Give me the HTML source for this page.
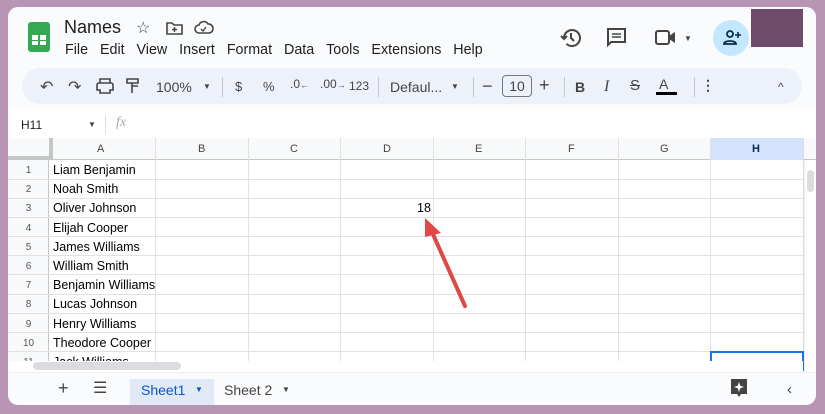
<!DOCTYPE html>
<html><head><meta charset="utf-8"><style>
*{box-sizing:border-box;margin:0;padding:0}
body{width:825px;height:414px;background:#b995b5;font-family:"Liberation Sans",sans-serif;position:relative;overflow:hidden}
.win{position:absolute;left:8px;top:7px;width:808px;height:398px;background:#f9fbfd;border-radius:10px;overflow:hidden}
.a{position:absolute}
.t{position:absolute;white-space:nowrap;color:#1f1f1f}
.grid{position:absolute;left:0;top:131px;width:808px;height:234px;background:#fff;overflow:hidden}
.vl{position:absolute;top:0;width:1px;height:234px;background:#e1e1e1}
.hl{position:absolute;left:0;width:795px;height:1px;background:#e1e1e1}
.tb{font-size:13px;color:#444}
</style></head><body>
<div class="win">
 <div class="a" style="left:20px;top:15px;width:22px;height:30px;background:#34a853;border-radius:3px"></div>
 <div class="a" style="left:24px;top:28px;width:14px;height:10px;background:#fff"></div>
 <div class="a" style="left:30px;top:28px;width:1.5px;height:10px;background:#34a853"></div>
 <div class="a" style="left:24px;top:32.5px;width:14px;height:1.5px;background:#34a853"></div>
 <div class="t" style="left:56px;top:10px;font-size:18px">Names</div>
 <div class="t" style="left:128px;top:11px;font-size:16px;color:#444">☆</div>
 <svg class="a" style="left:158px;top:14px" width="18" height="14"><path d="M1 2h5l2 2h8v9H1z" fill="none" stroke="#444" stroke-width="1.6"/><path d="M8.5 6v5M6 8.5h5" stroke="#444" stroke-width="1.4"/></svg>
 <svg class="a" style="left:186px;top:13px" width="20" height="15"><path d="M5 13a4 4 0 0 1 0-8 5 5 0 0 1 9-1 4 4 0 0 1 1 9z" fill="none" stroke="#444" stroke-width="1.6"/><path d="M7 9l2 2 3-4" fill="none" stroke="#444" stroke-width="1.3"/></svg>
 <div class="t" style="left:57px;top:35px;font-size:14.3px">File&nbsp;&nbsp;&nbsp;Edit&nbsp;&nbsp;&nbsp;View&nbsp;&nbsp;&nbsp;Insert&nbsp;&nbsp;&nbsp;Format&nbsp;&nbsp;&nbsp;Data&nbsp;&nbsp;&nbsp;Tools&nbsp;&nbsp;&nbsp;Extensions&nbsp;&nbsp;&nbsp;Help</div>
 <svg class="a" style="left:552px;top:20px" width="22" height="22"><path d="M4 11a8 8 0 1 1 2.5 5.8" fill="none" stroke="#444" stroke-width="2"/><path d="M1 9l3 3 3-3" fill="none" stroke="#444" stroke-width="2"/><path d="M11 6v5l3 3" fill="none" stroke="#444" stroke-width="2"/></svg>
 <svg class="a" style="left:598px;top:20px" width="22" height="22"><path d="M2 2h17v13H5l-3 3z" fill="none" stroke="#444" stroke-width="2"/><path d="M6 7h9M6 10h9" stroke="#444" stroke-width="1.6"/></svg>
 <svg class="a" style="left:646px;top:22px" width="26" height="18"><rect x="2" y="2" width="13" height="13" rx="2" fill="none" stroke="#444" stroke-width="2"/><path d="M15 7l6-4v11l-6-4z" fill="#444"/></svg>
 <div class="t" style="left:676px;top:27px;font-size:8px;color:#444">▼</div>
 <div class="a" style="left:705px;top:13px;width:36px;height:36px;border-radius:50%;background:#c2e7ff"></div>
 <svg class="a" style="left:714px;top:22px" width="20" height="18"><circle cx="8" cy="5" r="3" fill="none" stroke="#0b2b4a" stroke-width="1.8"/><path d="M2 15c0-4 12-4 12 0z" fill="none" stroke="#0b2b4a" stroke-width="1.8"/><path d="M16 3v6M13 6h6" stroke="#0b2b4a" stroke-width="1.6"/></svg>
 <div class="a" style="left:743px;top:2px;width:52px;height:38px;background:#6e4a6b"></div>
 <div class="a" style="left:14px;top:61px;width:780px;height:36px;background:#edf2fa;border-radius:18px"></div>
 <div class="t tb" style="left:32px;top:70px;font-size:16px">↶</div>
 <div class="t tb" style="left:60px;top:70px;font-size:16px">↷</div>
 <svg class="a" style="left:88px;top:71px" width="18" height="16"><path d="M4 5V1h10v4M3 5h12a2 2 0 0 1 2 2v5h-3v3H4v-3H1V7a2 2 0 0 1 2-2z" fill="none" stroke="#444" stroke-width="1.6"/></svg>
 <svg class="a" style="left:118px;top:70px" width="14" height="18"><path d="M1 2h11v4H1zM6 6v3h6M6 9v7" fill="none" stroke="#444" stroke-width="1.6"/></svg>
 <div class="t tb" style="left:148px;top:72px;font-size:14px">100%</div>
 <div class="t" style="left:195px;top:75px;font-size:8px;color:#444">▼</div>
 <div class="a" style="left:214px;top:70px;width:1px;height:20px;background:#c7c7c7"></div>
 <div class="t tb" style="left:227px;top:72px">$</div>
 <div class="t tb" style="left:255px;top:72px">%</div>
 <div class="t tb" style="left:282px;top:70px;font-size:12px">.0<span style="font-size:9px">←</span></div>
 <div class="t tb" style="left:312px;top:70px;font-size:12px">.00<span style="font-size:9px">→</span></div>
 <div class="t tb" style="left:341px;top:72px;font-size:12px">123</div>
 <div class="a" style="left:370px;top:70px;width:1px;height:20px;background:#c7c7c7"></div>
 <div class="t tb" style="left:382px;top:72px;font-size:14px">Defaul...</div>
 <div class="t" style="left:443px;top:75px;font-size:8px;color:#444">▼</div>
 <div class="a" style="left:465px;top:70px;width:1px;height:20px;background:#c7c7c7"></div>
 <div class="t tb" style="left:474px;top:69px;font-size:18px">−</div>
 <div class="a" style="left:494px;top:68px;width:30px;height:22px;border:1px solid #747775;border-radius:4px;font-size:14px;color:#444;text-align:center;line-height:20px">10</div>
 <div class="t tb" style="left:531px;top:68px;font-size:18px">+</div>
 <div class="a" style="left:556px;top:70px;width:1px;height:20px;background:#c7c7c7"></div>
 <div class="t tb" style="left:567px;top:72px;font-weight:bold;font-size:14px">B</div>
 <div class="t tb" style="left:596px;top:71px;font-style:italic;font-family:'Liberation Serif',serif;font-size:16px">I</div>
 <div class="t tb" style="left:622px;top:70px;font-size:15px;text-decoration:line-through">S</div>
 <div class="t tb" style="left:651px;top:69px;font-size:14px">A</div>
 <div class="a" style="left:648px;top:85px;width:21px;height:3px;background:#000"></div>
 <div class="a" style="left:686px;top:70px;width:1px;height:20px;background:#c7c7c7"></div>
 <div class="t tb" style="left:693px;top:70px;font-weight:bold;font-size:14px">⋮</div>
 <div class="t tb" style="left:770px;top:73px;font-size:12px">^</div>
 <div class="a" style="left:0;top:104px;width:808px;height:27px;background:#fff"></div>
 <div class="t" style="left:13px;top:111px;font-size:12px">H11</div>
 <div class="t" style="left:80px;top:113px;font-size:8px;color:#444">▼</div>
 <div class="a" style="left:97px;top:109px;width:1px;height:18px;background:#ddd"></div>
 <div class="t" style="left:108px;top:108px;font-size:14px;color:#aaa;font-style:italic;font-family:'Liberation Serif',serif">fx</div>
 <div class="grid">
  <div class="a" style="left:0;top:0;width:808px;height:22px;background:#f8f9fa;border-bottom:1px solid #c4c7c5"></div>
  <div class="a" style="left:0;top:0;width:41px;height:234px;background:#f8f9fa;border-right:1px solid #c4c7c5"></div>
  <div class="a" style="left:0;top:0;width:45px;height:22px;background:#f8f9fa;border-right:4px solid #c4c7c5;border-bottom:4px solid #c4c7c5"></div>
  <div class="a" style="left:702px;top:0;width:93px;height:22px;background:#d3e3fd"></div>
  <div class="vl" style="left:147px"></div><div class="vl" style="left:240px"></div><div class="vl" style="left:332px"></div><div class="vl" style="left:425px"></div><div class="vl" style="left:517px"></div><div class="vl" style="left:610px"></div><div class="vl" style="left:702px"></div><div class="vl" style="left:795px;background:#ddd"></div>
  <div class="hl" style="top:41px"></div><div class="hl" style="top:60px"></div><div class="hl" style="top:79px"></div><div class="hl" style="top:98px"></div><div class="hl" style="top:117px"></div><div class="hl" style="top:136px"></div><div class="hl" style="top:156px"></div><div class="hl" style="top:175px"></div><div class="hl" style="top:194px"></div><div class="hl" style="top:213px"></div>
  <div class="t" style="left:89px;top:5px;font-size:11px;color:#444">A</div>
  <div class="t" style="left:190px;top:5px;font-size:11px;color:#444">B</div>
  <div class="t" style="left:282px;top:5px;font-size:11px;color:#444">C</div>
  <div class="t" style="left:375px;top:5px;font-size:11px;color:#444">D</div>
  <div class="t" style="left:467px;top:5px;font-size:11px;color:#444">E</div>
  <div class="t" style="left:560px;top:5px;font-size:11px;color:#444">F</div>
  <div class="t" style="left:652px;top:5px;font-size:11px;color:#444">G</div>
  <div class="t" style="left:744px;top:5px;font-size:11px;color:#0b2b4a;font-weight:bold">H</div>
  <div style="position:absolute;left:0;top:23px;width:41px;font-size:10px;color:#555;text-align:center;line-height:19.2px">1<br>2<br>3<br>4<br>5<br>6<br>7<br>8<br>9<br>10<br>11</div>
  <div style="position:absolute;left:45px;top:23px;font-size:12.5px;color:#000;line-height:19.2px;white-space:nowrap">Liam Benjamin<br>Noah Smith<br>Oliver Johnson<br>Elijah Cooper<br>James Williams<br>William Smith<br>Benjamin Williams<br>Lucas Johnson<br>Henry Williams<br>Theodore Cooper<br>Jack Williams</div>
  <div class="t" style="left:409px;top:63px;font-size:12.5px;color:#000">18</div>
  <div class="a" style="left:702px;top:213px;width:94px;height:20px;border:2px solid #1a73e8"></div>
  <div class="a" style="left:796px;top:22px;width:12px;height:212px;background:#fff;border-left:1px solid #eee"></div>
  <div class="a" style="left:799px;top:32px;width:7px;height:22px;background:#dadce0;border-radius:4px"></div>
  <div class="a" style="left:0;top:223px;width:795px;height:11px;background:#fff"></div>
  <div class="a" style="left:25px;top:224px;width:148px;height:8px;background:#dadce0;border-radius:4px"></div>
 </div>
 <div class="a" style="left:0;top:365px;width:808px;height:1px;background:#eee"></div>
 <div class="t" style="left:50px;top:371px;font-size:18px;color:#444">+</div>
 <div class="t" style="left:85px;top:371px;font-size:16px;color:#444">☰</div>
 <div class="a" style="left:122px;top:372px;width:84px;height:26px;background:#e1e9f7"></div>
 <div class="t" style="left:133px;top:375px;font-size:14px;color:#0b57d0">Sheet1</div>
 <div class="t" style="left:187px;top:378px;font-size:8px;color:#0b57d0">▼</div>
 <div class="t" style="left:216px;top:375px;font-size:14px;color:#444">Sheet 2</div>
 <div class="t" style="left:274px;top:378px;font-size:8px;color:#444">▼</div>
 <svg class="a" style="left:722px;top:371px" width="18" height="22"><path d="M1 1h16v15h-6l-2 3-2-3H1z" fill="#444"/><path d="M9 4l1.3 3.7L14 9l-3.7 1.3L9 14l-1.3-3.7L4 9l3.7-1.3z" fill="#fff"/></svg>
 <div class="t" style="left:779px;top:374px;font-size:15px;color:#444">‹</div>
</div>
<svg class="a" style="left:0;top:0" width="825" height="414"><path d="M465 306L432 232" stroke="#e04848" stroke-width="4" stroke-linecap="round"/><path d="M425 218L441 233L425 237z" fill="#e04848"/></svg>
</body></html>
